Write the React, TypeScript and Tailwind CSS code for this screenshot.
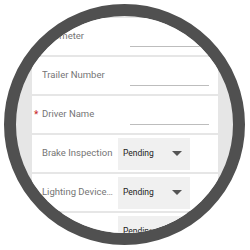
import React from "react";

function Arrow() {
  return (
    <svg width="10" height="5" viewBox="0 0 10 5" className="shrink-0">
      <path d="M0 0 L10 0 L5 5 Z" fill="#555555" />
    </svg>
  );
}

function InputRow({ label, required }: { label: string; required?: boolean }) {
  return (
    <div className="flex h-[37px] items-center bg-white">
      <div className="w-[10px] shrink-0 pl-[2px] text-[10px] leading-none text-[#c62828]">
        {required ? "*" : ""}
      </div>
      <div className="w-[76px] shrink-0 truncate pr-[4px] text-[9.5px] text-[#757575]">{label}</div>
      <div className="ml-[12px] mb-[8px] h-px w-[79px] self-end bg-[#bdbdbd]" />
    </div>
  );
}

function SelectRow({ label }: { label: string }) {
  return (
    <div className="flex h-[37px] items-center bg-white">
      <div className="w-[10px] shrink-0" />
      <div className="w-[76px] shrink-0 truncate pr-[4px] text-[9.5px] text-[#757575]">{label}</div>
      <div className="flex h-[32px] w-[72px] items-center justify-between bg-[#f0f0f0] pl-[5px] pr-[8px]">
        <span className="text-[8.5px] text-[#222222]">Pending</span>
        <Arrow />
      </div>
    </div>
  );
}

export default function App() {
  return (
    <div className="h-[250px] w-[250px] bg-white p-[4px]" style={{ fontFamily: "Roboto, 'Noto Sans', sans-serif" }}>
      <div className="h-[241px] w-[241px] overflow-hidden rounded-full border-[12px] border-[#505050] bg-[#e6e6e6]">
        <div className="flex flex-col gap-[2px] pl-[16px] pr-[15px] pt-[2px]">
          <InputRow label="Odometer" />
          <InputRow label="Trailer Number" />
          <InputRow label="Driver Name" required />
          <SelectRow label="Brake Inspection" />
          <SelectRow label="Lighting Devices and Reflectors" />
          <SelectRow label="Steering" />
        </div>
      </div>
    </div>
  );
}
